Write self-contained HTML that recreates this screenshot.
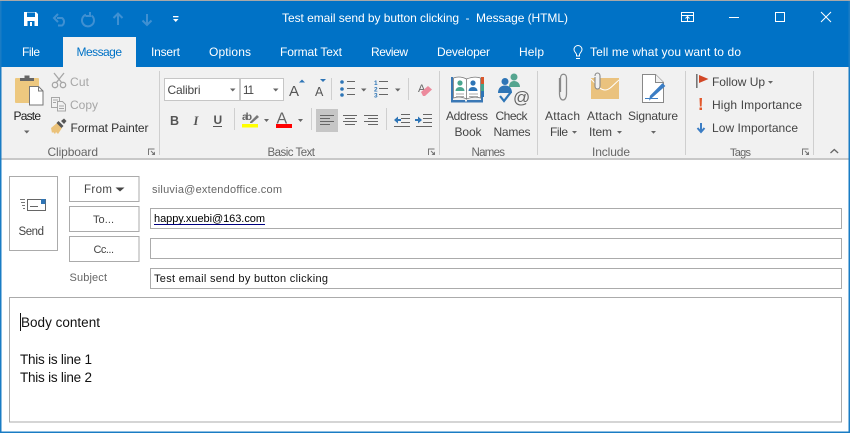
<!DOCTYPE html>
<html><head><meta charset="utf-8"><style>
html,body{margin:0;padding:0;background:#fff;width:850px;height:433px;overflow:hidden}
svg{display:block}
text{font-family:"Liberation Sans",sans-serif;font-size:12px;fill:#444}
.w{fill:#fff}.g{fill:#a6a6a6}.l{fill:#666}.d{fill:#222}
.f{fill:none;stroke:#ababab;stroke-width:1}
.ln{stroke:#666;stroke-width:1;fill:none}
.sep{stroke:#cfcfcf;stroke-width:1}
.arr{fill:#666}
</style></head><body>
<svg width="850" height="433" viewBox="0 0 850 433" xmlns="http://www.w3.org/2000/svg">
<rect width="850" height="433" fill="#fff"/>
<rect width="850" height="67" fill="#0072C6"/>
<rect width="850" height="1" fill="#a8a8a8"/>
<rect y="67" width="850" height="91" fill="#f1f1f1"/>
<rect y="158" width="850" height="2" fill="#c8c8c8"/>
<rect x="63" y="37" width="73" height="30" fill="#f1f1f1"/>
<!-- window frame -->
<rect y="1" width="1.5" height="432" fill="#1a7cc4"/>
<rect x="848.5" y="1" width="1.5" height="432" fill="#1a7cc4"/>
<rect y="431.5" width="850" height="1.5" fill="#1a7cc4"/>

<!-- QAT -->
<path d="M24 12h12l2 2v12H24z" fill="#fff"/><rect x="27" y="12.5" width="8" height="4.5" fill="#0072C6"/><rect x="27.5" y="21" width="7" height="5" fill="#0072C6"/><rect x="30" y="22" width="2" height="4" fill="#fff"/>
<g fill="none" stroke="#3f90d2" stroke-width="2"><path d="M57 18h5a4.500 4.500 0 0 1 0 7.500h-4"/><path d="M58 14l-4 4 4 4"/><path d="M91.500 15.500a6 6 0 1 1-5.500-.8"/><path d="M87 12v4h-4.500" transform="translate(3 0)"/><path d="M118 14v11M113.500 18l4.500-4.500 4.500 4.500"/><path d="M147 14v11M142.500 20.500l4.500 4.500 4.500-4.500"/></g>
<rect x="173" y="16" width="5.500" height="1.300" fill="#fff"/><path d="M173 19h5.500l-2.750 3z" fill="#fff"/>

<!-- title -->
<text class="w" x="282" y="22" textLength="286" lengthAdjust="spacing" xml:space="preserve">Test email send by button clicking  -  Message (HTML)</text>
<g fill="none" stroke="#fff" stroke-width="1"><rect x="681.500" y="12.500" width="12" height="9"/><path d="M681.500 15.500h12M687.500 21v-4M685.500 18.500l2-2 2 2"/><path d="M729 17.500h10"/><rect x="775.500" y="12.500" width="9" height="9"/><path d="M821 12l10 10M831 12l-10 10"/></g>

<!-- tabs -->
<text class="w" x="22" y="56" textLength="18">File</text>
<text x="76.500" y="56" textLength="45.500" style="fill:#0072C6">Message</text>
<text class="w" x="151" y="56" textLength="29">Insert</text>
<text class="w" x="209" y="56" textLength="42">Options</text>
<text class="w" x="280" y="56" textLength="62">Format Text</text>
<text class="w" x="371" y="56" textLength="37">Review</text>
<text class="w" x="437" y="56" textLength="53">Developer</text>
<text class="w" x="519" y="56" textLength="25">Help</text>
<path d="M576 58.500h4M576.500 56v-1.500c0-1.500-2.500-2.500-2.500-5a4 4 0 0 1 8 0c0 2.500-2.500 3.500-2.500 5V56z" fill="none" stroke="#fff" stroke-width="1"/>
<text class="w" x="590" y="56" textLength="151">Tell me what you want to do</text>

<!-- separators -->
<path class="sep" d="M159.500 71v84M439.500 71v84M537.500 71v84M685.500 71v84M813.500 71v84M331.500 78v22M408.500 78v22M234.500 108v22M311.500 108v22M386.500 108v22"/>

<!-- Clipboard -->
<rect x="15" y="78" width="24" height="25" rx="1" fill="#EDC87F"/>
<path d="M20 81v-3h4.500v-2.500h5V78H34v3z" fill="#666"/>
<path d="M29.500 86.500h9l4.500 4.500v14H29.500z" fill="#fff" stroke="#777"/><path d="M38.500 86.500V91H43" fill="none" stroke="#777"/>
<text class="d" x="13.500" y="120" textLength="27.500">Paste</text>
<path class="arr" d="M24 130.500h5.500l-2.750 3z"/>
<g fill="none" stroke="#a6a6a6" stroke-width="1.300"><path d="M54 73l8 10M64 73l-8 10"/><circle cx="55" cy="85" r="2.700"/><circle cx="63" cy="85" r="2.700"/></g>
<text class="g" x="70" y="86" textLength="19">Cut</text>
<g fill="#f1f1f1" stroke="#a6a6a6"><path d="M51.500 97.500h8v10h-8z"/><path d="M57.500 101.500h5l3 3v6.500h-8z"/></g><path d="M53 100h5M53 102.500h3M59 106h5M59 108.500h5" stroke="#a6a6a6" fill="none"/>
<text class="g" x="70" y="109" textLength="28">Copy</text>
<path d="M51 128l6-5 5 5-4 6-2-2-1 2-2-2-1 1z" fill="#EBC27A"/><path d="M56.500 123l2-2 5 5-2 2z" fill="#555"/><path d="M61 121l3-2.500 2.500 2.500-2.500 3z" fill="#555"/>
<text class="d" x="70.500" y="132" textLength="78" style="fill:#333">Format Painter</text>
<text class="l" x="47.500" y="156" textLength="50.500">Clipboard</text>
<g fill="none" stroke="#777"><path d="M148.500 155v-6h6"/><path d="M151 151l3.500 3.500"/></g><path d="M155 155h-3.500l3.500-3.500z" fill="#777"/>

<!-- Font boxes -->
<rect x="164.500" y="78.500" width="75" height="22" fill="#fff" stroke="#c6c6c6"/>
<rect x="240.500" y="78.500" width="43" height="22" fill="#fff" stroke="#c6c6c6"/>
<text x="167.500" y="94" textLength="33" style="fill:#444">Calibri</text>
<text x="243" y="94" textLength="11" style="font-size:11.500px;fill:#444">11</text>
<path class="arr" d="M230 88.500h5.500l-2.750 3zM273 88.500h5.500l-2.750 3z"/>
<text x="289" y="96" textLength="11" style="font-size:15px;fill:#555">A</text><path d="M299 82.500h6l-3-3z" fill="#2e75b6"/>
<text x="315" y="96" textLength="9" style="font-size:12.500px;fill:#555">A</text><path d="M320 79h6l-3 3z" fill="#2e75b6"/>

<!-- lists -->
<g fill="#2e75b6"><circle cx="342" cy="82" r="1.800"/><circle cx="342" cy="89" r="1.800"/><circle cx="342" cy="95" r="1.800"/></g>
<path class="ln" d="M347 81.500h8M347 88.500h8M347 94.500h8M379 81.500h9M379 88.500h9M379 94.500h9"/>
<text x="374" y="85" style="font-size:6.500px;font-weight:bold;fill:#2e75b6">1</text><text x="374" y="91.500" style="font-size:6.500px;font-weight:bold;fill:#2e75b6">2</text><text x="374" y="97.500" style="font-size:6.500px;font-weight:bold;fill:#2e75b6">3</text>
<path class="arr" d="M361 88.500h5.500l-2.750 3zM395 88.500h5.500l-2.750 3z"/>
<text x="418" y="92" textLength="8" style="font-size:11px;fill:#666">A</text><path d="M421 92l7-6 4 3.500-7 6.500h-2z" fill="#EC8A9C"/>

<!-- row2 -->
<text x="170" y="125" textLength="8" style="font-size:12.500px;font-weight:bold;fill:#555">B</text>
<text x="193.500" y="125" textLength="6" style="font-size:12.500px;font-style:italic;font-family:'Liberation Serif',serif;font-weight:bold;fill:#555">I</text>
<text x="213.500" y="124" textLength="8" style="font-size:12px;font-weight:bold;fill:#555">U</text><rect x="213" y="126" width="9" height="1" fill="#555"/>
<text x="242" y="120" textLength="10" style="font-size:10.500px;font-weight:bold;fill:#666">ab</text><path d="M250 122l7-7 2 2-7 6h-2z" fill="#777"/>
<rect x="242" y="124" width="16" height="3.500" fill="#ffff00"/>
<path class="arr" d="M264 119h5l-2.500 3z"/>
<text x="276.500" y="123.500" textLength="14" style="font-size:16px;fill:#666">A</text><rect x="276" y="124" width="16" height="4" fill="#f00"/>
<path class="arr" d="M298 119h5l-2.500 3z"/>
<rect x="316" y="109" width="22" height="23" fill="#c6c6c6"/>
<path class="ln" d="M320 115.500h14M320 118.500h10M320 121.500h14M320 124.500h10M343 115.500h14M345 118.500h10M343 121.500h14M345 124.500h10M364 115.500h14M368 118.500h10M364 121.500h14M368 124.500h10"/>
<path class="ln" d="M401 114.500h9M401 118.500h9M401 122.500h9M394 126.500h16M423 114.500h9M423 118.500h9M423 122.500h9M416 126.500h16"/>
<path d="M394 120l4-3.500V119h3v2h-3v2.500zM422 120l-4-3.500V119h-3v2h3v2.500z" fill="#2e75b6"/>
<text class="l" x="267.500" y="156" textLength="47.500" style="font-size:11.500px">Basic Text</text>
<g fill="none" stroke="#777"><path d="M428.500 155v-6h6"/><path d="M431 151l3.500 3.500"/></g><path d="M435 155h-3.500l3.500-3.500z" fill="#777"/>

<!-- Address book -->
<path d="M451 77h2v23h12v1.500h2V100h14V77h2v25.500H451z" fill="#3a78b5"/>
<path d="M453.500 78c4-1.500 9-1 13 1v20c-4-2-9-2.500-13-1zM480.500 78c-4-1.500-9-1-14 1v20c5-2 10-2.500 14-1z" fill="#fff" stroke="#777" stroke-width=".8"/>
<rect x="481" y="77" width="3" height="7" fill="#d9562b"/><rect x="481" y="84" width="3" height="7" fill="#3fa58f"/><rect x="481" y="91" width="3" height="6" fill="#2e75b6"/>
<circle cx="460" cy="83" r="2.600" fill="#4aa68f"/><path d="M455.500 91c0-2.500 2-4 4.500-4s4.500 1.500 4.500 4z" fill="#4aa68f"/>
<circle cx="473" cy="83" r="2.600" fill="#2e75b6"/><path d="M468.500 91c0-2.500 2-4 4.500-4s4.500 1.500 4.500 4z" fill="#2e75b6"/>
<path d="M456 94h8M456 96.500h8M469 94h9M469 96.500h9" stroke="#aaa"/>
<text x="446" y="120" textLength="42">Address</text><text x="454.500" y="136" textLength="27">Book</text>

<!-- Check names -->
<circle cx="514" cy="77" r="3.500" fill="#55a58f"/><path d="M509 87c0-4 2-6 5-6s6 2 6 6z" fill="#55a58f"/>
<circle cx="505" cy="81.500" r="3.500" fill="#2e75b6"/><path d="M498 93c0-5 3-7.500 7-7.500s7 2.500 7 7.500z" fill="#2e75b6"/>
<path d="M500 96l4 5 7-9" fill="none" stroke="#2e75b6" stroke-width="2.200"/>
<text x="513" y="103" style="font-size:17px;fill:#666">@</text>
<text x="495.500" y="120" textLength="32">Check</text><text x="493.500" y="136" textLength="37">Names</text>
<text class="l" x="471.500" y="156" textLength="33.500" style="font-size:11.500px">Names</text>

<!-- Attach -->
<path d="M560 79v16c0 8 7 8 7 0V79c0-5-6-5-6 0v14" fill="none" stroke="#8a8a8a" stroke-width="1.300" transform="translate(-.5 -1)"/>
<text x="545" y="120" textLength="35">Attach</text><text x="550" y="136" textLength="18">File</text>
<path class="arr" d="M572 131h5l-2.500 2.800z"/>
<rect x="591" y="78" width="28" height="21" fill="#EAC27E"/>
<path d="M591 79c6 6 9 11 14 11s9-6 14-10" fill="none" stroke="#fff" stroke-width="1"/>
<path d="M595 76c0-4 5-4 5 0v10c0 4-5 4-5 0v-9" fill="#f1f1f1" stroke="#888" stroke-width="1.100"/>
<text x="587" y="120" textLength="35">Attach</text><text x="589" y="136" textLength="23">Item</text>
<path class="arr" d="M617 131h5l-2.500 2.800z"/>
<path d="M642.500 74.500h13l8 8v20h-21z" fill="#fff" stroke="#888"/><path d="M655.500 74.500v8h8" fill="#f1f1f1" stroke="#888"/>
<path d="M652 97l-2 2 .5-3 12-12 2 2z" fill="#3b7dc4" stroke="#3b7dc4" stroke-width="1.200"/>
<path d="M645 98.500h13" stroke="#3b7dc4" stroke-width="1"/>
<text x="628" y="120" textLength="50">Signature</text>
<path class="arr" d="M651 131h5l-2.500 2.800z"/>
<text class="l" x="592" y="156" textLength="38">Include</text>

<!-- Tags -->
<rect x="696" y="74" width="1.600" height="14" fill="#777"/><path d="M699 75l9.500 4-9.500 4z" fill="#D24726"/>
<text x="712" y="86" textLength="53">Follow Up</text><path class="arr" d="M768 81h5l-2.500 2.800z"/>
<path d="M699.500 98h2.500l-.4 8.500h-1.700zM699.500 107.500h2.500v2.500h-2.500z" fill="#E2582C"/>
<text x="712" y="109" textLength="90">High Importance</text>
<path d="M701 123v8M697.500 128l3.500 4 3.500-4" fill="none" stroke="#3b7dc4" stroke-width="2"/>
<text x="712" y="132" textLength="86">Low Importance</text>
<text class="l" x="730" y="156" textLength="21" style="font-size:11px">Tags</text>
<g fill="none" stroke="#777"><path d="M802.500 155v-6h6"/><path d="M805 151l3.500 3.500"/></g><path d="M809 155h-3.500l3.500-3.500z" fill="#777"/>
<path d="M830.500 153l3.800-3.500 3.800 3.500" fill="none" stroke="#666" stroke-width="1.300"/>

<!-- Form -->
<rect class="f" x="9.500" y="176.500" width="48" height="74"/>
<rect class="f" x="69.500" y="176.500" width="69.500" height="25"/>
<rect class="f" x="69.500" y="206.500" width="69.500" height="25"/>
<rect class="f" x="69.500" y="236.500" width="69.500" height="25"/>
<rect class="f" x="150.500" y="208.500" width="691" height="20"/>
<rect class="f" x="150.500" y="238.500" width="691" height="20"/>
<rect class="f" x="150.500" y="268.500" width="691" height="20"/>
<rect class="f" x="9.500" y="297.500" width="832" height="124.500"/>

<rect x="27.500" y="199.500" width="18" height="11" fill="#fff" stroke="#666"/><rect x="41" y="199" width="4.500" height="5" fill="#2e75b6"/><path d="M30 206.500h8" stroke="#666"/>
<path d="M20 199.500h5M21 202.500h4M22 205.500h3M23 208.500h2" stroke="#777"/>
<text x="18.500" y="235" textLength="25.500" style="font-size:11.500px">Send</text>

<text x="84" y="193" textLength="28" style="font-size:11.500px">From</text><path d="M115.500 187.500h9l-4.500 4z" fill="#444"/>
<text class="l" x="152" y="193" textLength="130" style="font-size:11px">siluvia@extendoffice.com</text>
<text x="93" y="223" textLength="21" style="font-size:11px">To...</text>
<text x="93.500" y="253" textLength="20.500" style="font-size:11px">Cc...</text>
<text class="l" x="69.500" y="281" textLength="37.500" style="font-size:11px">Subject</text>
<text x="154" y="222" textLength="111" style="font-size:11px;fill:#000">happy.xuebi@163.com</text><rect x="154" y="224" width="111" height="1" fill="#000080"/>
<text x="154" y="282" textLength="174" style="font-size:11px;fill:#111">Test email send by button clicking</text>

<rect x="20" y="313" width="1" height="18" fill="#111"/>
<text x="21" y="327" textLength="79" style="font-size:13.500px;fill:#111">Body content</text>
<text x="20" y="364" textLength="72" style="font-size:13.500px;fill:#111">This is line 1</text>
<text x="20" y="382" textLength="72" style="font-size:13.500px;fill:#111">This is line 2</text>
</svg>
</body></html>
